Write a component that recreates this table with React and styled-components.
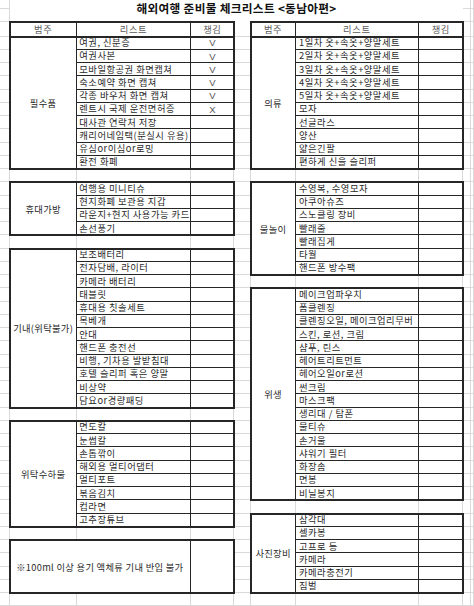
import styled, { createGlobalStyle } from "styled-components";

const GlobalStyle = createGlobalStyle`
  html, body {
    margin: 0;
    padding: 0;
    background: #fff;
  }

  body {
    overflow: hidden;
    font-family: "Noto Sans CJK KR", "Noto Sans", sans-serif;
  }
`;

const COLUMNS = "10px 67.3px 113.4px 43.3px 17.3px 44.7px 122.7px 44.3px 8px 1fr";
const ROWS = "8.5px 13.8px 14.4px repeat(43, 13.25px)";
const LINE = "#262626";

const LEFT = [
  {
    row: "4 / span 10",
    name: "필수품",
    items: [
      ["여권, 신분증", "V"],
      ["여권사본", "V"],
      ["모바일항공권 화면캡쳐", "V"],
      ["숙소예약 화면 캡쳐", "V"],
      ["각종 바우처 화면 캡쳐", "V"],
      ["렌트시 국제 운전면허증", "X"],
      ["대사관 연락처 저장"],
      ["캐리어네임택(분실시 유용)"],
      ["유심or이심or로밍"],
      ["환전 화폐"],
    ],
  },
  {
    row: "15 / span 4",
    name: "휴대가방",
    items: [["여행용 미니티슈"], ["현지화폐 보관용 지갑"], ["라운지+현지 사용가능 카드"], ["손선풍기"]],
  },
  {
    row: "20 / span 12",
    name: "기내(위탁불가)",
    items: [
      ["보조배터리"],
      ["전자담배, 라이터"],
      ["카메라 배터리"],
      ["태블릿"],
      ["휴대용 칫솔세트"],
      ["목베개"],
      ["안대"],
      ["핸드폰 충전선"],
      ["비행, 기차용 발받침대"],
      ["호텔 슬리퍼 혹은 양말"],
      ["비상약"],
      ["담요or경량패딩"],
    ],
  },
  {
    row: "33 / span 8",
    name: "위탁수하물",
    items: [
      ["면도칼"],
      ["눈썹칼"],
      ["손톱깎이"],
      ["해외용 멀티어댑터"],
      ["멀티포트"],
      ["볶음김치"],
      ["컵라면"],
      ["고추장튜브"],
    ],
  },
];

const RIGHT = [
  {
    row: "4 / span 10",
    name: "의류",
    items: [
      ["1일차 옷+속옷+양말세트"],
      ["2일차 옷+속옷+양말세트"],
      ["3일차 옷+속옷+양말세트"],
      ["4일차 옷+속옷+양말세트"],
      ["5일차 옷+속옷+양말세트"],
      ["모자"],
      ["선글라스"],
      ["양산"],
      ["얇은긴팔"],
      ["편하게 신을 슬리퍼"],
    ],
  },
  {
    row: "15 / span 7",
    name: "물놀이",
    items: [
      ["수영복, 수영모자"],
      ["아쿠아슈즈"],
      ["스노클링 장비"],
      ["빨래줄"],
      ["빨래집게"],
      ["타월"],
      ["핸드폰 방수팩"],
    ],
  },
  {
    row: "23 / span 16",
    name: "위생",
    items: [
      ["메이크업파우치"],
      ["폼클렌징"],
      ["클렌징오일, 메이크업리무버"],
      ["스킨, 로션, 크림"],
      ["샴푸, 린스"],
      ["헤어트리트먼트"],
      ["헤어오일or로션"],
      ["썬크림"],
      ["마스크팩"],
      ["생리대 / 탐폰"],
      ["물티슈"],
      ["손거울"],
      ["샤워기 필터"],
      ["화장솜"],
      ["면봉"],
      ["비닐봉지"],
    ],
  },
  {
    row: "40 / span 6",
    name: "사진장비",
    items: [["삼각대"], ["셀카봉"], ["고프로 등"], ["카메라"], ["카메라충전기"], ["짐벌"]],
  },
];

const SIDES = [
  { col: "2 / 5", cols: "67.3px 113.4px 1fr", pad: 2, groups: LEFT },
  { col: "6 / 9", cols: "44.7px 122.7px 1fr", pad: 3, groups: RIGHT },
];

const Sheet = styled.div`
  display: grid;
  width: 474px;
  height: 606px;
  overflow: hidden;

  & > * {
    grid-area: 1 / 1;
  }
`;

const Layer = styled.div`
  display: grid;
  grid-template-columns: ${COLUMNS};
  grid-template-rows: ${ROWS};
`;

const GridCell = styled.div`
  border-right: 1px solid #dadada;
  border-bottom: 1px solid #dadada;
`;

const Title = styled.div`
  grid-column: 2 / 9;
  grid-row: 1 / 3;
  background: #fff;
  display: flex;
  justify-content: center;
  align-items: flex-start;
  padding-top: 1px;
  font-size: 11.7px;
  line-height: 14px;
  font-weight: 700;
  letter-spacing: 0.3px;
  color: #111;
  white-space: nowrap;
`;

const Block = styled.div`
  grid-column: ${(p) => p.$col};
  grid-row: ${(p) => p.$row};
  display: grid;
  grid-template-columns: ${(p) => p.$cols};
  grid-template-rows: repeat(${(p) => p.$n}, 1fr);
  background: #fff;
  outline: 2px solid ${LINE};
  outline-offset: -1px;
  font-size: 9.3px;
  color: #2a2a2a;
`;

const HeadCell = styled.div`
  display: flex;
  align-items: center;
  justify-content: center;
  border-right: ${(p) => (p.$last ? "none" : `1px solid ${LINE}`)};
  color: #5a5a5a;
  letter-spacing: 0.6px;
`;

const Category = styled.div`
  grid-row: 1 / -1;
  display: flex;
  align-items: center;
  justify-content: center;
  border-right: 1px solid ${LINE};
  white-space: nowrap;
  letter-spacing: 0.3px;
`;

const Item = styled.div`
  display: flex;
  align-items: center;
  padding-left: ${(p) => p.$pad}px;
  border-right: 1px solid ${LINE};
  border-bottom: 1px solid ${LINE};
  white-space: nowrap;
  line-height: 1;
  letter-spacing: 0.5px;
`;

const Check = styled.div`
  display: flex;
  align-items: center;
  justify-content: center;
  border-bottom: 1px solid ${LINE};
  font-family: "Liberation Sans", Arial, sans-serif;
  font-size: 9.5px;
  color: #555;
`;

const Note = styled.div`
  display: flex;
  align-items: center;
  justify-content: center;
  border-right: 1px solid ${LINE};
  white-space: nowrap;
  letter-spacing: 0.3px;
`;

function Entry({ label, mark, pad }) {
  return (
    <>
      <Item $pad={pad}>{label}</Item>
      <Check>{mark}</Check>
    </>
  );
}

function Group({ side, group }) {
  return (
    <Block $col={side.col} $row={group.row} $cols={side.cols} $n={group.items.length}>
      <Category>{group.name}</Category>
      {group.items.map(([label, mark]) => (
        <Entry key={label} label={label} mark={mark} pad={side.pad} />
      ))}
    </Block>
  );
}

export default function App() {
  const cells = Array.from({ length: 46 * 10 }, (_, i) => <GridCell key={i} />);

  return (
    <>
      <GlobalStyle />
      <Sheet>
        <Layer>{cells}</Layer>
        <Layer>
          <Title>해외여행 준비물 체크리스트 &lt;동남아편&gt;</Title>

          {SIDES.map((side) => (
            <Block key={side.col} $col={side.col} $row="3 / 4" $cols={side.cols} $n={1}>
              <HeadCell>범주</HeadCell>
              <HeadCell>리스트</HeadCell>
              <HeadCell $last>챙김</HeadCell>
            </Block>
          ))}

          {SIDES.map((side) =>
            side.groups.map((group) => <Group key={group.name} side={side} group={group} />)
          )}

          <Block $col="2 / 5" $row="42 / span 4" $cols="180.7px 1fr" $n={1}>
            <Note>※100ml 이상 용기 액체류 기내 반입 불가</Note>
            <div />
          </Block>
        </Layer>
      </Sheet>
    </>
  );
}
